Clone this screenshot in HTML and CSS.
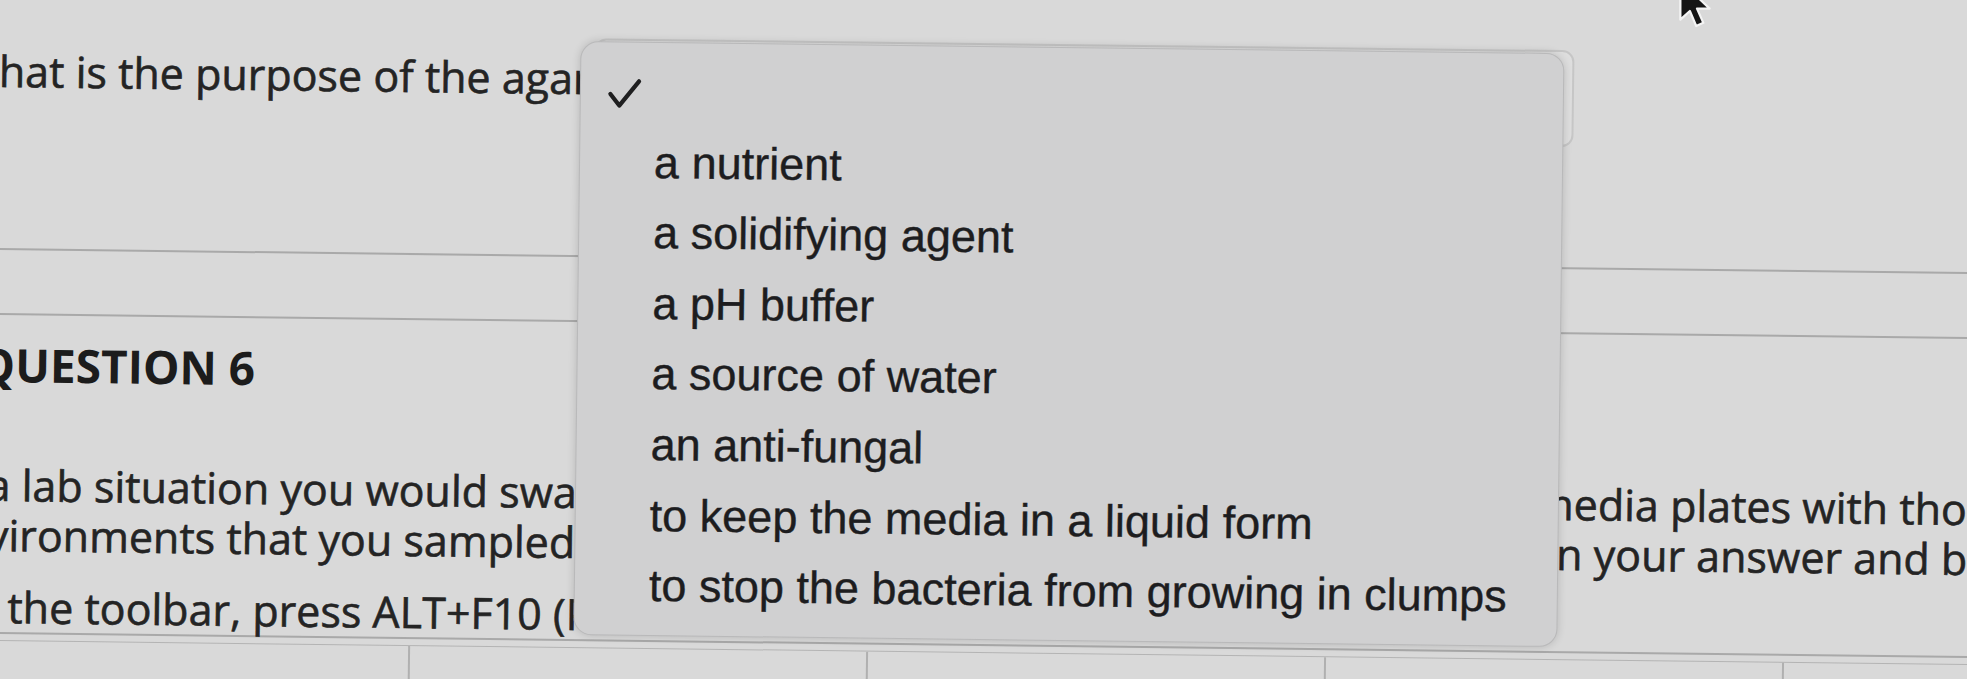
FILE: index.html
```html
<!DOCTYPE html>
<html lang="en">
<head>
<meta charset="utf-8">
<title>Question</title>
<link rel="stylesheet" href="styles.css">
</head>
<body>
<div class="page">
  <div class="q-row">
    <p class="q-text">What is the purpose of the agar</p>
    <div class="select"></div>
  </div>
  <div class="spacer-row"></div>
  <h2 class="q-head">QUESTION 6</h2>
  <div class="para">
    <div class="para-left">
      <p class="line">In a lab situation you would swa</p>
      <p class="line">environments that you sampled</p>
    </div>
    <div class="para-right">
      <p class="line r1">media plates with tho</p>
      <p class="line r2">in your answer and b</p>
    </div>
  </div>
  <div class="toolbar-line">
    <p class="line l3">For the toolbar, press ALT+F10 (P</p>
  </div>
  <div class="toolbar">
    <div class="cell"></div>
    <div class="cell"></div>
    <div class="cell"></div>
    <div class="cell"></div>
    <div class="cell"></div>
  </div>

  <div class="menu">
    <div class="menu-check">
      <svg class="check" viewBox="0 0 34 30" width="34" height="30" aria-hidden="true">
        <path d="M2.5 15.5 L11.5 27 L31 2.5" fill="none" stroke="#1f1f20" stroke-width="4.2" stroke-linecap="round" stroke-linejoin="round"/>
      </svg>
    </div>
    <div class="menu-item">a nutrient</div>
    <div class="menu-item">a solidifying agent</div>
    <div class="menu-item">a pH buffer</div>
    <div class="menu-item">a source of water</div>
    <div class="menu-item">an anti-fungal</div>
    <div class="menu-item">to keep the media in a liquid form</div>
    <div class="menu-item">to stop the bacteria from growing in clumps</div>
  </div>
</div>
<svg class="cursor" viewBox="0 0 24 36" width="38" height="58" aria-hidden="true">
  <path d="M1.5 1.5 L1.5 26 L7.5 20.5 L11.5 30 L16 28 L12 19 L20 19 Z" fill="#151515" stroke="#f4f4f4" stroke-width="1.4" stroke-linejoin="round"/>
</svg>
</body>
</html>
```

FILE: styles.css
```css
html, body {
  margin: 0;
  padding: 0;
}

body {
  width: 1967px;
  height: 679px;
  overflow: hidden;
  background: #d9d9d9;
  font-family: "Open Sans", "DejaVu Sans", sans-serif;
  color: #242424;
  position: relative;
}

.page {
  position: relative;
  width: 2100px;
  transform: rotate(0.7deg);
  transform-origin: 0 0;
}

p, h2 {
  margin: 0;
}

.q-row {
  height: 250px;
  box-sizing: border-box;
  padding-top: 31px;
  border-bottom: 2px solid #a9a9a9;
  display: flex;
  align-items: flex-start;
}

.q-text {
  margin: 15px 0 0 -40px;
  font-size: 43px;
  line-height: 50px;
  white-space: nowrap;
  flex: none;
  -webkit-text-stroke: 0.6px #242424;
}

.select {
  flex: none;
  margin-left: 4px;
  width: 980px;
  height: 97px;
  box-sizing: border-box;
  border: 2px solid #c6c6c6;
  border-radius: 12px;
  background: #dedede;
}

.spacer-row {
  height: 65px;
  box-sizing: border-box;
  border-bottom: 2px solid #a9a9a9;
}

.q-head {
  margin: 24px 0 0 -17px;
  font-size: 46px;
  line-height: 50px;
  font-weight: 700;
  color: #1c1c1c;
  white-space: nowrap;
}

.para {
  margin-top: 71px;
  display: grid;
  grid-template-columns: 1538px auto;
}

.line {
  font-size: 43px;
  line-height: 50px;
  white-space: nowrap;
  -webkit-text-stroke: 0.6px #242424;
}

.para-left {
  margin-left: -57px;
}

.r1 {
  margin-left: 2px;
}

.r2 {
  padding-left: 14px;
}

.toolbar-line {
  margin-top: 22px;
  border-bottom: 2px solid #a9a9a9;
}

.l3 {
  margin-left: -62px;
}

.toolbar {
  margin-top: 6px;
  margin-left: -42px;
  height: 60px;
  border-top: 1px solid #b4b4b4;
  display: grid;
  grid-template-columns: repeat(5, 458px);
}

.cell {
  border-left: 2px solid #b0b0b0;
}

.cell:first-child {
  border-left: none;
}

.menu {
  position: absolute;
  left: 581px;
  top: 34px;
  width: 984px;
  box-sizing: border-box;
  padding: 14px 0 13px 0;
  background: #d0d0d1;
  border: 1px solid #b9b9ba;
  border-radius: 18px;
  box-shadow: 0 0 9px rgba(0, 0, 0, 0.16);
  font-family: "Liberation Sans", Arial, sans-serif;
  color: #1d1d1f;
}

.menu-check {
  height: 70.6px;
  display: flex;
  align-items: center;
  padding-left: 27px;
}

.check {
  display: block;
  margin-top: 4px;
}

.menu-item {
  height: 70.6px;
  line-height: 70.6px;
  font-size: 45px;
  padding-left: 74px;
  white-space: nowrap;
  -webkit-text-stroke: 0.4px #1d1d1f;
}

.cursor {
  position: absolute;
  left: 1678px;
  top: -22px;
}
```
